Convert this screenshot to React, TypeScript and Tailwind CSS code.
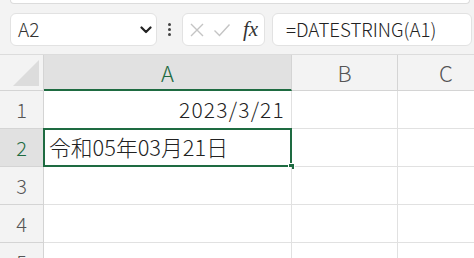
import React from "react";

const font = { fontFamily: '"Noto Sans CJK JP", "Noto Sans", sans-serif' };

function Row({ n, a, selected }: { n: number; a?: React.ReactNode; selected?: boolean }) {
  return (
    <div className="flex h-[38px] shrink-0">
      <div
        className={`w-[44px] shrink-0 flex items-center justify-center border-b border-r border-[#d4d4d4] text-[20px] font-light ${
          selected ? "bg-[#e1e1e1] text-[#1e6b41]" : "bg-[#f3f3f3] text-[#555]"
        }`}
      >
        {n}
      </div>
      <div className="relative w-[248px] shrink-0 border-b border-r border-[#e1e1e1] bg-white flex items-center">
        {a}
        {selected && (
          <>
            <div className="absolute left-[-1px] top-[-1px] right-[-1px] bottom-[-1px] border-2 border-[#1e6b41]" />
            <div className="absolute right-[-4px] bottom-[-4px] w-[7px] h-[7px] bg-[#1e6b41] border border-white" />
          </>
        )}
      </div>
      <div className="w-[106px] shrink-0 border-b border-r border-[#e1e1e1] bg-white" />
      <div className="flex-1 border-b border-[#e1e1e1] bg-white" />
    </div>
  );
}

export default function App() {
  return (
    <div className="w-[474px] h-[258px] overflow-hidden bg-[#f3f3f3] flex flex-col" style={font}>
      <div className="ml-[10px] mr-[4px] h-[4px] shrink-0 bg-white border-b border-x border-[#dcdcdc] rounded-b-[4px]" />
      <div className="flex items-center h-[33px] mt-[9px] shrink-0 pl-[10px]">
        <div className="w-[147px] h-full bg-white border border-[#e2e2e2] rounded-[6px] flex items-center justify-between pl-[7px] pr-[4px]">
          <span className="text-[19px] font-light text-[#333]">A2</span>
          <svg width="12" height="8" viewBox="0 0 12 8">
            <path d="M1.5 1.5 L6 6 L10.5 1.5" fill="none" stroke="#222" strokeWidth="2.2" strokeLinecap="round" strokeLinejoin="round" />
          </svg>
        </div>
        <div className="w-[25px] flex flex-col items-center justify-center gap-[2px]">
          <span className="w-[3px] h-[3px] rounded-full bg-[#444]" />
          <span className="w-[3px] h-[3px] rounded-full bg-[#444]" />
          <span className="w-[3px] h-[3px] rounded-full bg-[#444]" />
        </div>
        <div className="w-[83px] h-full bg-white border border-[#e2e2e2] rounded-[6px] flex items-center pl-[6px] gap-[8px]">
          <svg width="16" height="16" viewBox="0 0 16 16">
            <path d="M2 2 L14 14 M14 2 L2 14" stroke="#c4c4c4" strokeWidth="1.4" />
          </svg>
          <svg width="18" height="16" viewBox="0 0 18 16">
            <path d="M1.5 8.5 L6.5 13.5 L16.5 2.5" fill="none" stroke="#c4c4c4" strokeWidth="1.4" />
          </svg>
          <span className="ml-[4px] text-[21px] italic font-normal text-[#333]" style={{ fontFamily: '"Liberation Serif", serif' }}>
            fx
          </span>
        </div>
        <div className="ml-[7px] flex-1 mr-[2px] h-full bg-white border border-[#e2e2e2] rounded-[6px] flex items-center pl-[13px]">
          <span className="text-[18.7px] font-light text-[#222]">=DATESTRING(A1)</span>
        </div>
      </div>
      <div className="mt-[8px] flex-1 flex flex-col border-t border-[#dcdcdc]">
        <div className="flex h-[36px] shrink-0 bg-[#f3f3f3]">
          <div className="relative w-[44px] shrink-0 border-r border-b border-[#d4d4d4]">
            <svg className="absolute right-[4px] bottom-[4px]" width="26" height="26" viewBox="0 0 26 26">
              <path d="M26 0 L26 26 L0 26 Z" fill="#dcdcdc" />
            </svg>
          </div>
          <div className="w-[248px] shrink-0 flex items-center justify-center bg-[#e1e1e1] border-r border-[#d4d4d4] border-b-2 border-b-[#1e6b41] text-[22px] font-light text-[#1e6b41]">
            A
          </div>
          <div className="w-[106px] shrink-0 flex items-center justify-center border-r border-b border-[#d4d4d4] text-[22px] font-light text-[#555]">
            B
          </div>
          <div className="flex-1 flex items-center justify-center border-b border-[#d4d4d4] text-[22px] font-light text-[#555] pl-[20px]">
            C
          </div>
        </div>
        <Row n={1} a={<span className="w-full text-right pr-[6px] text-[21px] tracking-[1.2px] font-light text-[#222]">2023/3/21</span>} />
        <Row n={2} selected a={<span className="pl-[5px] text-[21.8px] font-light text-[#222]">令和05年03月21日</span>} />
        <Row n={3} />
        <Row n={4} />
        <Row n={5} />
      </div>
    </div>
  );
}
